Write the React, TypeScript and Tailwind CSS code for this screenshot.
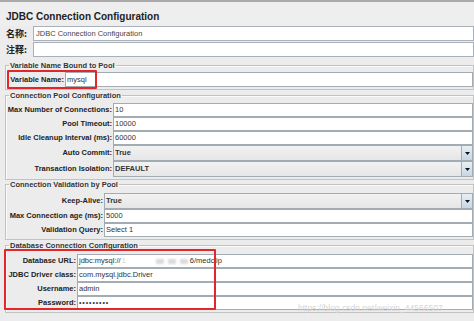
import React from 'react';

function TextField({ value, children }: { value?: string; children?: React.ReactNode }) {
  return (
    <div className="flex h-[14px] flex-1 items-center border border-[#a3abb3] bg-white pl-[1px] text-[7.5px] text-[#333]">
      {children ?? value}
    </div>
  );
}

function Combo({ value }: { value: string }) {
  return (
    <div className="flex h-[16px] flex-1 border border-[#a3abb3] bg-gradient-to-b from-[#f2f2f2] to-[#e6e6e6]">
      <div className="flex flex-1 items-center pl-[1px] text-[7.5px] font-bold text-[#333]">{value}</div>
      <div className="flex w-[11px] items-center justify-center border-l border-[#a3abb3] bg-gradient-to-b from-[#e8eff6] to-[#c8d7e5]">
        <svg width="5" height="3" viewBox="0 0 5 3">
          <path d="M0 0h5L2.5 3z" fill="#111" />
        </svg>
      </div>
    </div>
  );
}

function Row({ label, labelW, children }: { label: string; labelW: string; children: React.ReactNode }) {
  return (
    <div className="flex">
      <div className={`${labelW} flex shrink-0 items-center justify-end pr-[1px] text-[7.5px] font-bold text-[#222]`}>
        {label}
      </div>
      {children}
    </div>
  );
}

function Group({ title, className, children }: { title: string; className: string; children: React.ReactNode }) {
  return (
    <fieldset className={`ml-[5px] border border-[#c2c2c2] shadow-[inset_1px_1px_0_#fafafa] ${className}`}>
      <legend className="ml-[3px] px-[1px] text-[7.5px] leading-[9px] font-bold text-[#333]">{title}</legend>
      {children}
    </fieldset>
  );
}

export default function App() {
  return (
    <div className="relative h-[321px] w-[474px] overflow-hidden bg-[#ececec] font-['Liberation_Sans',Arial,sans-serif]">
      <div className="h-[2px] bg-[#a9a9a9]" />
      <div className="flex h-[24px] items-center bg-[#eeeeee] pl-[6px] pt-[4px] text-[10px] font-bold text-[#222]">
        JDBC Connection Configuration
      </div>

      <div className="flex flex-col gap-[1px] pl-[6px]">
        <div className="flex h-[15px]">
          <div className="flex w-[27px] shrink-0 items-center font-['Noto_Sans_CJK_SC',sans-serif] text-[9px] font-bold text-[#222]">
            名称:
          </div>
          <div className="flex flex-1 items-center border border-[#a9b0b7] bg-white pl-[2px] text-[7.5px] text-[#444]">
            JDBC Connection Configuration
          </div>
        </div>
        <div className="flex h-[15px]">
          <div className="flex w-[27px] shrink-0 items-center font-['Noto_Sans_CJK_SC',sans-serif] text-[9px] font-bold text-[#222]">
            注释:
          </div>
          <div className="flex-1 border border-[#a9b0b7] bg-white" />
        </div>
      </div>

      <Group title="Variable Name Bound to Pool" className="mt-[4px] pt-[2px] pb-[2px]">
        <Row label="Variable Name:" labelW="w-[59px]">
          <div className="flex h-[15px] flex-1 items-center border border-[#a3abb3] bg-white pl-[1px] text-[7.5px] text-[#333]">
            mysql
          </div>
        </Row>
      </Group>

      <Group title="Connection Pool Configuration" className="mt-[1px] pt-[3px] pb-[2px]">
        <Row label="Max Number of Connections:" labelW="w-[107px]">
          <TextField value="10" />
        </Row>
        <Row label="Pool Timeout:" labelW="w-[107px]">
          <TextField value="10000" />
        </Row>
        <Row label="Idle Cleanup Interval (ms):" labelW="w-[107px]">
          <TextField value="60000" />
        </Row>
        <Row label="Auto Commit:" labelW="w-[107px]">
          <Combo value="True" />
        </Row>
        <Row label="Transaction Isolation:" labelW="w-[107px]">
          <Combo value="DEFAULT" />
        </Row>
      </Group>

      <Group title="Connection Validation by Pool" className="pt-[4px] pb-[2px]">
        <Row label="Keep-Alive:" labelW="w-[98px]">
          <Combo value="True" />
        </Row>
        <Row label="Max Connection age (ms):" labelW="w-[98px]">
          <TextField value="5000" />
        </Row>
        <Row label="Validation Query:" labelW="w-[98px]">
          <TextField value="Select 1" />
        </Row>
      </Group>

      <Group title="Database Connection Configuration" className="mt-[1px] pt-[4px] pb-[2px]">
        <Row label="Database URL:" labelW="w-[71px]">
          <TextField>
            <span>jdbc:mysql://</span>
            <span className="ml-[1px] text-[#cfcfcf] blur-[0.6px]">1</span>
            <span className="ml-[30px] inline-block h-[5px] w-[8px] bg-[#dadada] blur-[1px]" />
            <span className="ml-[4px] inline-block h-[5px] w-[8px] bg-[#dadada] blur-[1px]" />
            <span className="ml-[4px] inline-block h-[5px] w-[8px] bg-[#dadada] blur-[1px]" />
            <span className="ml-[2px]">6/medclip</span>
          </TextField>
        </Row>
        <Row label="JDBC Driver class:" labelW="w-[71px]">
          <TextField value="com.mysql.jdbc.Driver" />
        </Row>
        <Row label="Username:" labelW="w-[71px]">
          <TextField value="admin" />
        </Row>
        <Row label="Password:" labelW="w-[71px]">
          <TextField>
            <span className="text-[7px] tracking-[0.9px]">•••••••••</span>
          </TextField>
        </Row>
      </Group>

      <div className="pointer-events-none absolute left-[7px] top-[70px] h-[19px] w-[90px] rounded-[1px] border-2 border-[#e3262a]" />
      <div className="pointer-events-none absolute left-[4px] top-[249px] h-[61px] w-[212px] rounded-[1px] border-2 border-[#e3262a]" />
      <div className="pointer-events-none absolute left-[298px] top-[302px] text-[8.5px] text-[#d4d4d4]">
        https://blog.csdn.net/weixin_44566507
      </div>
    </div>
  );
}
